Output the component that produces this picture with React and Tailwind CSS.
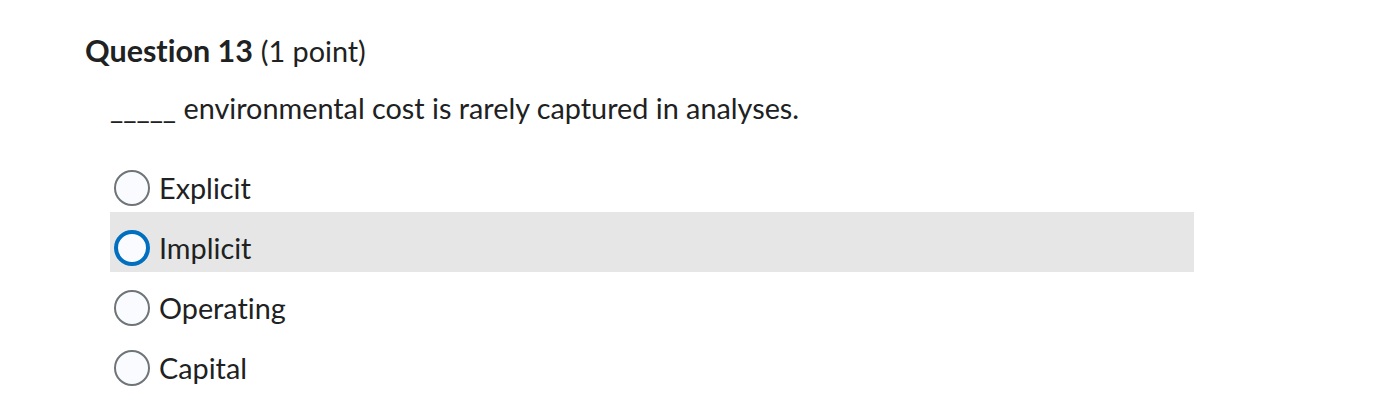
export default function App() {
  const options = ["Explicit", "Implicit", "Operating", "Capital"];
  return (
    <div
      className="w-[1376px] h-[418px] bg-white text-[#202122] [font-variant-ligatures:none]"
      style={{ fontFamily: "Lato, 'Noto Sans', sans-serif" }}
    >
      <div className="pl-[85px] pt-[31px]">
        <h2 className="text-[30.5px] leading-[38px]">
          <span className="font-bold">Question 13</span>{" "}
          <span className="text-[28.8px]">(1 point)</span>
        </h2>
      </div>
      <div className="pl-[110px] pr-[182px]">
        <p className="mt-[20px] text-[28.8px] leading-[36px]">_____ environmental cost is rarely captured in analyses.</p>
        <div className="mt-[26px] flex flex-col">
          {options.map((o, i) => (
            <div key={o} className={`flex items-center h-[60px] pt-[12px] ${i === 1 ? "bg-[#e6e6e6]" : ""}`}>
              <span
                className={`ml-[4px] w-[36px] h-[36px] rounded-full bg-[#f9fbff] ${i === 1 ? "border-[4px] border-[#006fbf]" : "border-[2.5px] border-[#6e7477]"}`}
              />
              <span className="ml-[9px] text-[28.8px] leading-[36px]">{o}</span>
            </div>
          ))}
        </div>
      </div>
    </div>
  );
}
